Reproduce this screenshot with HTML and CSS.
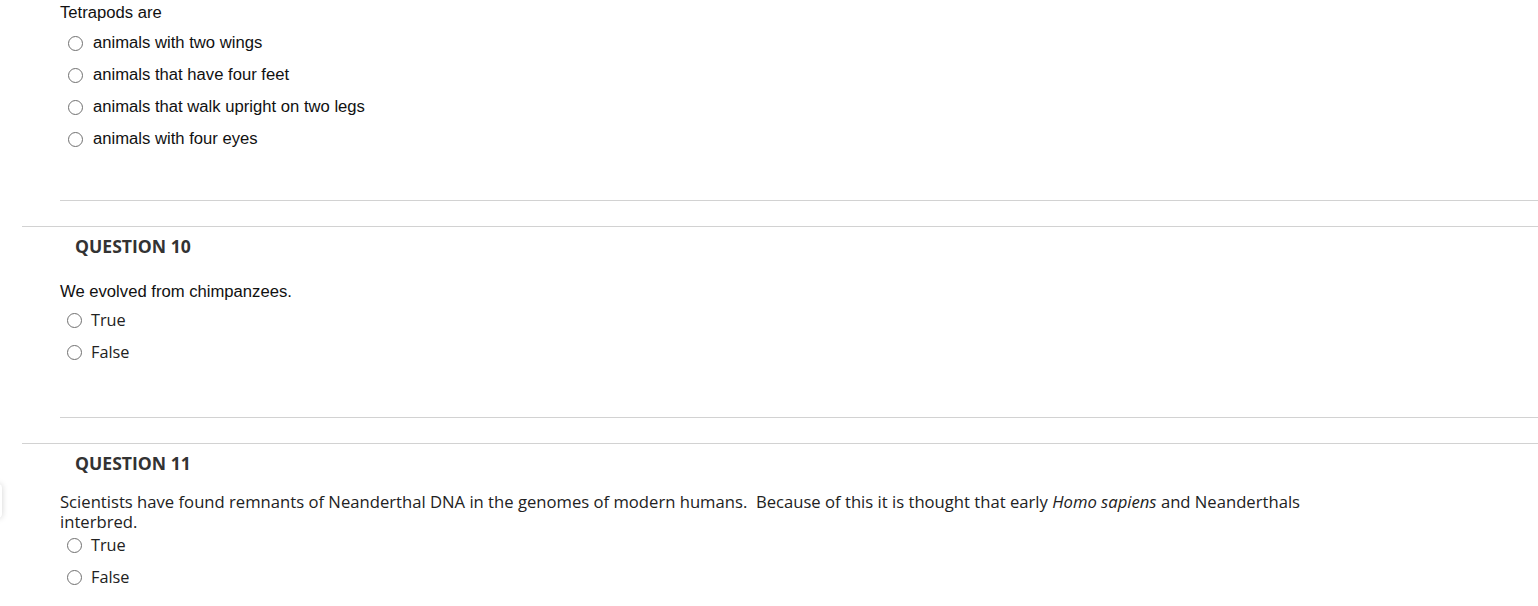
FILE: index.html
```html
<!DOCTYPE html>
<html>
<head>
<meta charset="utf-8">
<link rel="stylesheet" href="styles.css">
</head>
<body>
<div class="edge-shadow"></div>
<section class="prev">
  <div class="prompt arial">Tetrapods are</div>
  <div class="options arial opts-prev">
    <div class="option"><span class="radio"></span>animals with two wings</div>
    <div class="option"><span class="radio"></span>animals that have four feet</div>
    <div class="option"><span class="radio"></span>animals that walk upright on two legs</div>
    <div class="option"><span class="radio"></span>animals with four eyes</div>
  </div>
</section>
<hr class="rule-inner">
<hr class="rule-outer">
<section class="question">
  <h2 class="q-title">QUESTION 10</h2>
  <div class="prompt arial q10-prompt">We evolved from chimpanzees.</div>
  <div class="options open opts-q10">
    <div class="option"><span class="radio"></span>True</div>
    <div class="option"><span class="radio"></span>False</div>
  </div>
</section>
<hr class="rule-inner rule-inner-2">
<hr class="rule-outer">
<section class="question">
  <h2 class="q-title">QUESTION 11</h2>
  <div class="prompt open q11-prompt">Scientists have found remnants of Neanderthal DNA in the genomes of modern humans.&nbsp; Because of this it is thought that early <em>Homo sapiens</em> and Neanderthals interbred.</div>
  <div class="options open opts-q11">
    <div class="option"><span class="radio"></span>True</div>
    <div class="option"><span class="radio"></span>False</div>
  </div>
</section>
</body>
</html>
```
FILE: styles.css
```css
html, body {
  margin: 0;
  padding: 0;
  background: #fff;
}
body {
  position: relative;
  width: 1538px;
  height: 606px;
  overflow: hidden;
  color: #111;
}
.arial {
  font-family: "Liberation Sans", Arial, sans-serif;
  font-size: 16.65px;
  color: #111;
}
.open {
  font-family: "Open Sans", sans-serif;
  font-size: 16.65px;
  color: #222;
}
.prev {
  padding: 3px 0 0 60px;
}
.prompt {
  line-height: 20px;
}
.options {
  display: flex;
  flex-direction: column;
  gap: 10px;
}
.option {
  height: 22px;
  display: flex;
  align-items: center;
  line-height: 22px;
}
.radio {
  width: 13px;
  height: 13px;
  border: 1px solid #707070;
  border-radius: 50%;
  background: #fff;
  flex: none;
}
.opts-prev {
  margin-top: 9px;
  padding-left: 8px;
}
.opts-prev .radio {
  margin-right: 10px;
}
hr {
  border: 0;
  height: 1px;
  background: #d2d2d2;
  margin: 0;
}
.rule-inner {
  margin-left: 60px;
  margin-top: 50px;
}
.rule-inner-2 {
  margin-top: 54px;
}
.rule-outer {
  margin-left: 22px;
  margin-top: 25px;
}
.question {
  padding-left: 60px;
}
.q-title {
  margin: 0;
  padding: 7px 0 0 15px;
  font-family: "Open Sans", sans-serif;
  font-weight: 700;
  font-size: 17.6px;
  line-height: 24px;
  color: #333;
}
.q10-prompt {
  margin-top: 24px;
}
.q11-prompt {
  margin-top: 17px;
  width: 1260px;
  color: #222;
}
.q11-prompt em {
  font-style: italic;
}
.opts-q10, .opts-q11 {
  padding-left: 7px;
  font-size: 16.3px;
}
.opts-q10 .radio, .opts-q11 .radio {
  margin-right: 9px;
}
.opts-q10 {
  margin-top: 7px;
}
.opts-q11 {
  margin-top: 2px;
}
.edge-shadow {
  position: absolute;
  left: -6px;
  top: 484px;
  width: 8px;
  height: 34px;
  border-radius: 4px;
  background: #fff;
  box-shadow: 0 0 6px rgba(0,0,0,0.18);
}
```
